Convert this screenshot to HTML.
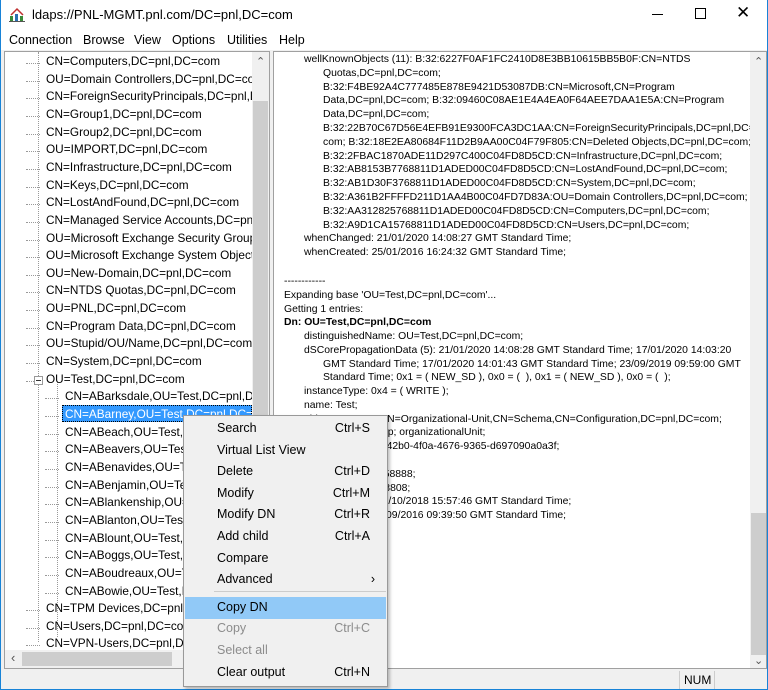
<!DOCTYPE html>
<html><head><style>
*{margin:0;padding:0;box-sizing:border-box}
body{width:768px;height:690px;overflow:hidden;background:#fff;font-family:"Liberation Sans",sans-serif;position:relative}
.a{position:absolute;white-space:nowrap}
#win{position:absolute;left:0;top:0;width:768px;height:690px;border:1px solid #1883d7;border-top:none;background:#f0f0f0}
.t{font-size:11.8px;color:#000}
.r{font-size:10.4px;color:#000;line-height:13.8px}
.m{font-size:12.5px}
.dot{position:absolute;border-top:1px dotted #999;width:8px}
</style></head><body>
<div id="win">
<div class="a" style="left:0;top:0;width:766px;height:31px;background:#fff"></div>
<svg class="a" style="left:8px;top:7px" width="16" height="16" viewBox="0 0 16 16"><rect x="1" y="9" width="3" height="5" fill="#3a8a3a"/><rect x="6" y="7" width="3" height="7" fill="#2a6fb3"/><rect x="11" y="9" width="3" height="5" fill="#3a8a3a"/><path d="M2 8 L8 2 L14 8" stroke="#c03030" stroke-width="1.5" fill="none"/><rect x="0" y="14" width="16" height="1" fill="#555"/></svg>
<div class="a" style="left:31px;top:7px;font-size:13px">ldaps://PNL-MGMT.pnl.com/DC=pnl,DC=com</div>
<div class="a" style="left:651px;top:14px;width:11px;height:1px;background:#000"></div>
<div class="a" style="left:694px;top:8px;width:11px;height:11px;border:1px solid #000"></div>
<div class="a" style="left:735px;top:3px;font-size:17px;font-weight:300">✕</div>
<div class="a m" style="left:0;top:31px;width:766px;height:19px;background:#fff"></div>
<div class="a m" style="left:8px;top:33px">Connection</div>
<div class="a m" style="left:82px;top:33px">Browse</div>
<div class="a m" style="left:133px;top:33px">View</div>
<div class="a m" style="left:171px;top:33px">Options</div>
<div class="a m" style="left:226px;top:33px">Utilities</div>
<div class="a m" style="left:278px;top:33px">Help</div>

<!-- left pane -->
<div class="a" style="left:3px;top:51px;width:266px;height:618px;background:#fff;border:1px solid #a0a0a0;overflow:hidden">
<div class="a" style="left:33px;top:0;height:590px;border-left:1px dotted #999"></div>
<div class="a" style="left:52px;top:330px;height:255px;border-left:1px dotted #999"></div>
<div class="a" style="left:57px;top:353px;width:190px;height:17px;background:#3399ff;border:1px dotted #000"></div>
<div id="tree"></div>
<div class="a" style="left:247px;top:0;width:17px;height:598px;background:#f0f0f0"></div>
<div class="a" style="left:251px;top:3px;font-size:11px;color:#555">⌃</div>
<div class="a" style="left:248px;top:49px;width:15px;height:549px;background:#cdcdcd"></div>
<div class="a" style="left:0;top:598px;width:264px;height:18px;background:#f0f0f0"></div>
<div class="a" style="left:6px;top:598px;font-size:13px;color:#555">‹</div>
<div class="a" style="left:17px;top:600px;width:150px;height:14px;background:#cdcdcd"></div>
</div>

<!-- right pane -->
<div class="a" style="left:272px;top:51px;width:494px;height:618px;background:#fff;border:1px solid #a0a0a0;overflow:hidden">
<div class="a r" style="left:30px;top:1px">wellKnownObjects (11): B:32:6227F0AF1FC2410D8E3BB10615BB5B0F:CN=NTDS</div>
<div class="a r" style="left:49px;top:14.8px">Quotas,DC=pnl,DC=com;<br>B:32:F4BE92A4C777485E878E9421D53087DB:CN=Microsoft,CN=Program<br>Data,DC=pnl,DC=com; B:32:09460C08AE1E4A4EA0F64AEE7DAA1E5A:CN=Program<br>Data,DC=pnl,DC=com;<br>B:32:22B70C67D56E4EFB91E9300FCA3DC1AA:CN=ForeignSecurityPrincipals,DC=pnl,DC=<br>com; B:32:18E2EA80684F11D2B9AA00C04F79F805:CN=Deleted Objects,DC=pnl,DC=com;<br>B:32:2FBAC1870ADE11D297C400C04FD8D5CD:CN=Infrastructure,DC=pnl,DC=com;<br>B:32:AB8153B7768811D1ADED00C04FD8D5CD:CN=LostAndFound,DC=pnl,DC=com;<br>B:32:AB1D30F3768811D1ADED00C04FD8D5CD:CN=System,DC=pnl,DC=com;<br>B:32:A361B2FFFFD211D1AA4B00C04FD7D83A:OU=Domain Controllers,DC=pnl,DC=com;<br>B:32:AA312825768811D1ADED00C04FD8D5CD:CN=Computers,DC=pnl,DC=com;<br>B:32:A9D1CA15768811D1ADED00C04FD8D5CD:CN=Users,DC=pnl,DC=com;</div>
<div class="a r" style="left:30px;top:180px">whenChanged: 21/01/2020 14:08:27 GMT Standard Time;<br>whenCreated: 25/01/2016 16:24:32 GMT Standard Time;</div>
<div class="a r" style="left:10px;top:223px">------------<br>Expanding base 'OU=Test,DC=pnl,DC=com'...<br>Getting 1 entries:<br><b>Dn: OU=Test,DC=pnl,DC=com</b></div>
<div class="a r" style="left:30px;top:278px">distinguishedName: OU=Test,DC=pnl,DC=com;<br>dSCorePropagationData (5): 21/01/2020 14:08:28 GMT Standard Time; 17/01/2020 14:03:20</div>
<div class="a r" style="left:49px;top:305.6px">GMT Standard Time; 17/01/2020 14:01:43 GMT Standard Time; 23/09/2019 09:59:00 GMT<br>Standard Time; 0x1 = ( NEW_SD ), 0x0 = (&nbsp; ), 0x1 = ( NEW_SD ), 0x0 = (&nbsp; );</div>
<div class="a r" style="left:30px;top:333px">instanceType: 0x4 = ( WRITE );<br>name: Test;<br>objectCategory: CN=Organizational-Unit,CN=Schema,CN=Configuration,DC=pnl,DC=com;<br>objectClass (2): top; organizationalUnit;<br>objectGUID: 1b2a42b0-4f0a-4676-9365-d697090a0a3f;<br>ou: Test;<br>uSNChanged: 5058888;<br>uSNCreated: 4858808;<br>whenChanged: 02/10/2018 15:57:46 GMT Standard Time;<br>whenCreated: 20/09/2016 09:39:50 GMT Standard Time;</div>
<div class="a" style="left:476px;top:0;width:17px;height:616px;background:#f0f0f0"></div>
<div class="a" style="left:480px;top:3px;font-size:11px;color:#555">⌃</div>
<div class="a" style="left:477px;top:461px;width:15px;height:142px;background:#cdcdcd"></div>
<div class="a" style="left:480px;top:602px;font-size:11px;color:#555">⌄</div>
</div>

<!-- status -->
<div class="a" style="left:678px;top:671px;width:36px;height:18px;border-left:1px solid #ccc;border-right:1px solid #ccc;font-size:12px;padding:2px 4px">NUM</div>

<!-- context menu -->
<div class="a" style="left:182px;top:415px;width:205px;height:272px;background:#f0f0f0;border:1px solid #999;box-shadow:2px 2px 3px rgba(0,0,0,.25)">
<div class="a" style="left:1px;top:181px;width:201px;height:22px;background:#91c9f7"></div>
<div class="a" style="left:30px;top:175px;width:172px;height:1px;background:#ccc"></div>
<div id="menu"></div>
</div>
</div>
<script>
var tree=["CN=Computers,DC=pnl,DC=com","OU=Domain Controllers,DC=pnl,DC=com","CN=ForeignSecurityPrincipals,DC=pnl,DC=com","CN=Group1,DC=pnl,DC=com","CN=Group2,DC=pnl,DC=com","OU=IMPORT,DC=pnl,DC=com","CN=Infrastructure,DC=pnl,DC=com","CN=Keys,DC=pnl,DC=com","CN=LostAndFound,DC=pnl,DC=com","CN=Managed Service Accounts,DC=pnl,DC=com","OU=Microsoft Exchange Security Groups","OU=Microsoft Exchange System Objects","OU=New-Domain,DC=pnl,DC=com","CN=NTDS Quotas,DC=pnl,DC=com","OU=PNL,DC=pnl,DC=com","CN=Program Data,DC=pnl,DC=com","OU=Stupid/OU/Name,DC=pnl,DC=com","CN=System,DC=pnl,DC=com","OU=Test,DC=pnl,DC=com",
"*CN=ABarksdale,OU=Test,DC=pnl,DC=com","*CN=ABarney,OU=Test,DC=pnl,DC=com","*CN=ABeach,OU=Test,DC=pnl,DC=com","*CN=ABeavers,OU=Test,DC=pnl","*CN=ABenavides,OU=Test,DC=pnl","*CN=ABenjamin,OU=Test,DC=pnl","*CN=ABlankenship,OU=Test,DC","*CN=ABlanton,OU=Test,DC=pnl","*CN=ABlount,OU=Test,DC=pnl","*CN=ABoggs,OU=Test,DC=pnl","*CN=ABoudreaux,OU=Test,DC","*CN=ABowie,OU=Test,DC=pnl",
"CN=TPM Devices,DC=pnl,DC=com","CN=Users,DC=pnl,DC=com","CN=VPN-Users,DC=pnl,DC=com"];
var h="";tree.forEach(function(s,i){var y=2+i*17.65,c=s[0]=="*",x=c?60:41;if(c)s=s.slice(1);
var col=(i==20)?"#fff":"#000";
h+='<div class="dot" style="left:'+(x-20)+'px;top:'+(y+9)+'px;width:14px"></div><div class="a t" style="left:'+x+'px;top:'+y+'px;color:'+col+'">'+s+'</div>';
if(i==18)h+='<div class="a" style="left:29px;top:'+(y+4)+'px;width:9px;height:9px;border:1px solid #999;background:#fff"><div style="position:absolute;left:1px;top:3px;width:5px;height:1px;background:#333"></div></div>';});
document.getElementById("tree").innerHTML=h;
var m=[["Search","Ctrl+S"],["Virtual List View",""],["Delete","Ctrl+D"],["Modify","Ctrl+M"],["Modify DN","Ctrl+R"],["Add child","Ctrl+A"],["Compare",""],["Advanced","›"],["Copy DN",""],["Copy","Ctrl+C",1],["Select all","",1],["Clear output","Ctrl+N"]];
var mh="";m.forEach(function(e,i){var y=5+i*21.6+(i>=8?6:0);var c=e[2]?"#8c8c8c":"#000";
mh+='<div class="a m" style="left:33px;top:'+y+'px;color:'+c+'">'+e[0]+'</div><div class="a m" style="right:'+(e[1]=="›"?12:17)+'px;top:'+y+'px;color:'+c+'">'+e[1]+'</div>';});
document.getElementById("menu").innerHTML=mh;
</script>
</body></html>
